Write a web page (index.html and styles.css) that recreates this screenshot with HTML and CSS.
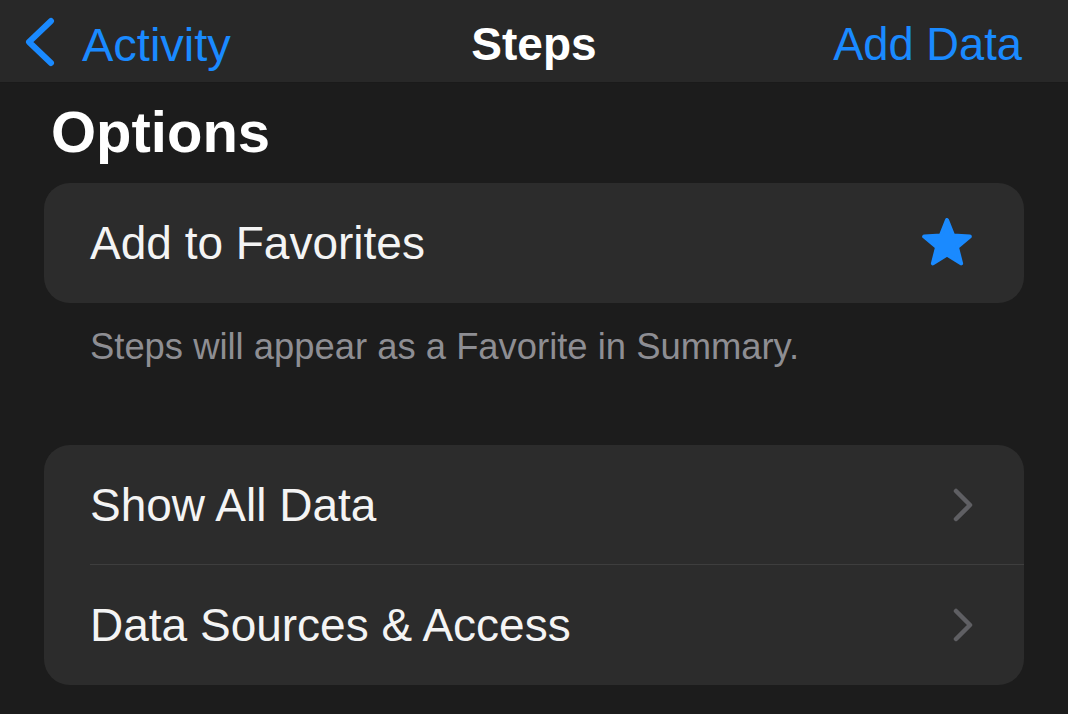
FILE: index.html
```html
<!DOCTYPE html>
<html lang="en">
<head>
<meta charset="utf-8">
<title>Steps</title>
<link rel="stylesheet" href="styles.css">
</head>
<body>
<header class="navbar">
  <div class="nav-left">
    <svg class="back-chevron" width="32" height="50" viewBox="0 0 32 50" aria-hidden="true">
      <polyline points="27,4 5,25 27,46" fill="none" stroke="currentColor" stroke-width="6" stroke-linecap="round" stroke-linejoin="round"/>
    </svg>
    <span class="nav-link">Activity</span>
  </div>
  <div class="nav-title">Steps</div>
  <div class="nav-right"><span class="nav-link nav-link-right">Add Data</span></div>
</header>

<main class="content">
  <h1 class="section-title">Options</h1>

  <div class="card">
    <div class="row">
      <div class="row-inner">
        <span class="row-label">Add to Favorites</span>
        <svg class="star" width="52" height="50" viewBox="-26 -26 52 50" aria-hidden="true">
          <polygon points="0,-24 6.17,-8.49 22.83,-7.42 9.99,3.24 14.11,19.42 0,10.5 -14.11,19.42 -9.99,3.24 -22.83,-7.42 -6.17,-8.49" fill="currentColor" stroke="currentColor" stroke-width="4" stroke-linejoin="round"/>
        </svg>
      </div>
    </div>
  </div>
  <p class="card-footer">Steps will appear as a Favorite in Summary.</p>

  <div class="card card-list">
    <div class="row">
      <div class="row-inner divided">
        <span class="row-label">Show All Data</span>
        <svg class="chevron" width="20" height="34" viewBox="0 0 20 34" aria-hidden="true">
          <polyline points="3,3 17,17 3,31" fill="none" stroke="currentColor" stroke-width="4.5" stroke-linecap="round" stroke-linejoin="round"/>
        </svg>
      </div>
    </div>
    <div class="row">
      <div class="row-inner">
        <span class="row-label">Data Sources &amp; Access</span>
        <svg class="chevron" width="20" height="34" viewBox="0 0 20 34" aria-hidden="true">
          <polyline points="3,3 17,17 3,31" fill="none" stroke="currentColor" stroke-width="4.5" stroke-linecap="round" stroke-linejoin="round"/>
        </svg>
      </div>
    </div>
  </div>
</main>
</body>
</html>
```

FILE: styles.css
```css
* { box-sizing: border-box; }

html, body {
  margin: 0;
  padding: 0;
}

body {
  width: 1068px;
  height: 714px;
  overflow: hidden;
  background: #1c1c1c;
  color: #ffffff;
  font-family: "Liberation Sans", Arial, sans-serif;
}

.navbar {
  height: 83px;
  padding: 8px 24px 0 24px;
  background: #282828;
  border-bottom: 1px solid #1a1a1a;
  display: grid;
  grid-template-columns: 1fr auto 1fr;
  align-items: center;
}

.nav-left {
  display: flex;
  align-items: center;
  gap: 26px;
  color: #1a8aff;
}

.back-chevron {
  display: block;
  margin-top: -6px;
}

.nav-link {
  font-size: 47px;
  line-height: 48px;
  color: #1a8aff;
}

.nav-link-right {
  font-size: 45.3px;
  margin-right: 22px;
}

.nav-title {
  font-size: 46px;
  line-height: 48px;
  font-weight: 700;
  color: #ffffff;
  margin-top: -2px;
}

.nav-right {
  display: flex;
  justify-content: flex-end;
}

.content {
  padding: 0 44px;
}

.section-title {
  margin: 20px 0 22px 7px;
  font-size: 58px;
  line-height: 58px;
  font-weight: 700;
  color: #ffffff;
}

.card {
  background: #2c2c2c;
  border-radius: 26px;
  overflow: hidden;
}

.row {
  padding-left: 46px;
}

.row-inner {
  height: 120px;
  padding-right: 51px;
  display: flex;
  align-items: center;
  justify-content: space-between;
}

.row-inner.divided {
  border-bottom: 1px solid #3e3e3e;
}

.row-label {
  font-size: 46px;
  line-height: 48px;
  color: #f4f4f4;
}

.star {
  display: block;
  color: #1a8aff;
}

.chevron {
  display: block;
  color: #5f5f63;
}

.card-footer {
  margin: 26px 0 80px 46px;
  font-size: 36.4px;
  line-height: 36px;
  color: #8e8e93;
}
```
